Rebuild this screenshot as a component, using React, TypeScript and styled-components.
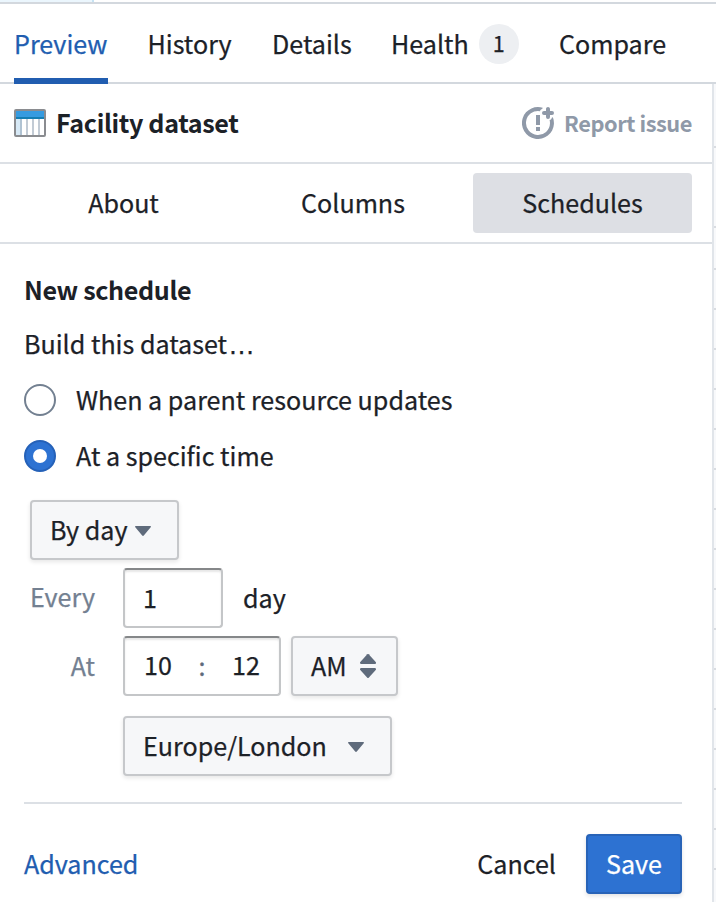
import React from "react";
import styled, { createGlobalStyle } from "styled-components";

const Global = createGlobalStyle`
  * { box-sizing: border-box; }
  body {
    margin: 0;
    background: #fff;
    color: #1c2127;
    font-family: "Noto Sans CJK SC", "Open Sans", sans-serif;
    font-size: 25.1px;
    line-height: 40px;
    overflow: hidden;
    -webkit-text-stroke: 0.25px;
  }
  button, input { font: inherit; color: inherit; }
`;

const Page = styled.div`
  display: flex;
  flex-direction: column;
  width: 716px;
  height: 902px;
  overflow: hidden;
  background: #fff;
  white-space: nowrap;
`;

const TopEdge = styled.div`
  height: 4px;
  flex: none;
  border-bottom: 2px solid #d3d8de;
`;

const TopEdgeTab = styled.div`
  width: 94px;
  height: 2px;
  background: #ebf6fd;
  border-right: 2px solid #c5e2f3;
`;

const TabBar = styled.nav`
  display: flex;
  flex: none;
  height: 80px;
  padding-left: 14px;
  border-bottom: 2px solid #d3d8de;
`;

const Tab = styled.div<{ $width: number; $active?: boolean }>`
  display: flex;
  align-items: center;
  width: ${(p) => p.$width}px;
  height: 80px;
  margin-right: 40px;
  padding-top: 4px;
  color: ${(p) => (p.$active ? "#215db0" : "#1c2127")};
  border-bottom: 6px solid ${(p) => (p.$active ? "#215db0" : "transparent")};
`;

const Badge = styled.span`
  width: 40px;
  height: 40px;
  margin: 2px 0 0 10px;
  border-radius: 50%;
  background: #edeff2;
  font-size: 21.6px;
  line-height: 38px;
  text-align: center;
`;

const Body = styled.div`
  display: flex;
  height: 818px;
`;

const Panel = styled.main`
  width: 712px;
  flex: none;
`;

const Gutter = styled.aside`
  width: 4px;
  padding-top: 62px;
  border-left: 2px solid #e1e5ea;
  background: #f8f9fb;
`;

const GutterTick = styled.div<{ $gap: number }>`
  height: 2px;
  margin-bottom: ${(p) => p.$gap}px;
  background: #d9dce1;
`;

const Header = styled.header`
  display: flex;
  align-items: center;
  height: 80px;
  padding: 0 20px 0 14px;
  border-bottom: 2px solid #dce0e5;
`;

const Title = styled.h1`
  margin: -2px auto 0 10px;
  font-size: 25.1px;
  font-weight: 700;
  letter-spacing: -0.35px;
  -webkit-text-stroke: 0;
`;

const ReportButton = styled.button`
  display: flex;
  align-items: center;
  gap: 10px;
  padding: 0;
  border: 0;
  background: none;
  color: #8f99a8;
  font-size: 21.8px;
  font-weight: 700;
  letter-spacing: -0.45px;
  -webkit-text-stroke: 0;
`;

const ReportLabel = styled.span`
  margin-top: -1px;
`;

const SubTabs = styled.div`
  display: flex;
  height: 80px;
  padding: 9px 20px 0 14px;
  border-bottom: 2px solid #dce0e5;
`;

const SubTab = styled.div<{ $active?: boolean }>`
  width: 219px;
  height: 60px;
  margin-right: 10.5px;
  border-radius: 4px;
  background: ${(p) => (p.$active ? "#dddfe4" : "transparent")};
  line-height: 58px;
  text-align: center;
  &:last-child { margin-right: 0; }
`;

const Form = styled.section`
  padding: 25px 30px 0 24px;
`;

const FormTitle = styled.h2`
  margin: 0;
  font-size: 25.1px;
  font-weight: 700;
  line-height: 40px;
  letter-spacing: -0.36px;
  -webkit-text-stroke: 0;
`;

const Lead = styled.p`
  margin: 14px 0 0;
  line-height: 40px;
`;

const Ellipsis = styled.span`
  margin-left: 1px;
  font-family: "Liberation Sans", sans-serif;
  font-size: 27px;
  line-height: 1;
`;

const Option = styled.label<{ $top: number }>`
  display: flex;
  align-items: center;
  gap: 20px;
  height: 40px;
  margin-top: ${(p) => p.$top}px;
`;

const OptionText = styled.span`
  margin-top: -2px;
`;

const Radio = styled.span<{ $checked?: boolean }>`
  display: flex;
  align-items: center;
  justify-content: center;
  width: 32px;
  height: 32px;
  border: 2px solid ${(p) => (p.$checked ? "#2561b8" : "#738091")};
  border-radius: 50%;
  background: ${(p) => (p.$checked ? "#2d72d2" : "#fff")};
`;

const RadioDot = styled.span`
  width: 14px;
  height: 14px;
  border-radius: 50%;
  background: #fff;
`;

const Fields = styled.div`
  padding: 24px 0 0 6px;
`;

const FieldRow = styled.div<{ $top: number }>`
  display: flex;
  height: 60px;
  margin-top: ${(p) => p.$top}px;
`;

const FieldLabel = styled.span<{ $lineHeight: number }>`
  width: 65px;
  margin-right: 28px;
  color: #738091;
  line-height: ${(p) => p.$lineHeight}px;
  text-align: right;
`;

const MenuButton = styled.button<{ $width: number; $gap: number; $left?: number }>`
  display: flex;
  align-items: center;
  gap: ${(p) => p.$gap}px;
  width: ${(p) => p.$width}px;
  height: 60px;
  margin-left: ${(p) => p.$left ?? 0}px;
  padding: 0 0 2px 18px;
  border: 2px solid #c6c8cb;
  border-radius: 4px;
  background: #f6f7f9;
  box-shadow: 0 2px 4px rgba(17, 20, 24, 0.1);
  text-align: left;
`;

const FieldBox = styled.div<{ $width: number }>`
  display: flex;
  align-items: center;
  width: ${(p) => p.$width}px;
  height: 60px;
  padding: 0 0 2px 18px;
  border: 2px solid #c4c6c8;
  border-top-color: #858789;
  border-radius: 4px;
  background: #fff;
  box-shadow: inset 0 2px 2px rgba(17, 20, 24, 0.1);
`;

const Digits = styled.span`
  width: 30px;
  margin: -2px -1px 0 1px;
`;

const Colon = styled.span`
  width: 58px;
  color: #5f6b7c;
  text-align: center;
`;

const Unit = styled.span`
  margin-left: 20px;
  line-height: 58px;
`;

const Footer = styled.footer`
  display: flex;
  align-items: center;
  height: 92px;
  margin-top: 26px;
  padding-top: 30px;
  border-top: 2px solid #dce0e5;
`;

const AdvancedLink = styled.a`
  margin: -2px auto 0 0;
  color: #215db0;
`;

const Cancel = styled.button`
  margin: -2px 30px 0 0;
  padding: 0;
  border: 0;
  background: none;
`;

const Save = styled.button`
  width: 96px;
  height: 60px;
  padding: 0 0 2px;
  border: 2px solid #2863b7;
  border-radius: 4px;
  background: #2d72d2;
  box-shadow: 0 2px 4px rgba(17, 20, 24, 0.12);
  color: #fff;
`;

const CaretIcon = styled.svg`
  flex: none;
  margin-top: 4px;
`;

const DoubleCaretIcon = styled.svg`
  flex: none;
  margin-top: 2px;
`;

const TableIcon = () => (
  <svg width="32" height="28" viewBox="0 0 32 28">
    <rect x="1" y="1" width="30" height="26" rx="1" fill="#fff" stroke="#8a8c90" strokeWidth="2" />
    <path d="M2 10h4v16H2z" fill="#d7e9f6" />
    <path d="M7 10v16" stroke="#b0c3d3" strokeWidth="2" />
    <path d="M13 10v16M19 10v16M25 10v16" stroke="#c2cbd5" strokeWidth="2" />
    <path d="M2 2h28v6H2z" fill="#369be0" />
    <path d="M2 8h28v2H2z" fill="#147eb3" />
  </svg>
);

const IssueIcon = () => (
  <svg width="32" height="32" viewBox="0 0 16 16" fill="#8f99a8">
    <path d="M8 0c.8 0 1.6.12 2.35.35L10.1 1c-.55.1-.95.5-1.08 1.08A6 6 0 1 0 14 8.15c0-.55-.08-1.08-.2-1.6.62-.13 1.02-.6 1.12-1.12l.52-.3A8 8 0 1 1 8 0z" />
    <path d="M7 4h2v5H7zM7 10h2v2H7z" />
    <path d="M13 0c.55 0 1 .45 1 1v1h1a1 1 0 1 1 0 2h-1v1a1 1 0 1 1-2 0V4h-1a1 1 0 1 1 0-2h1V1c0-.55.45-1 1-1z" />
  </svg>
);

const Caret = () => (
  <CaretIcon width="16" height="10" viewBox="0 0 16 10">
    <path d="M.7 0h14.6c.7 0 .9.7.4 1.2L8.8 9.5c-.4.5-1.2.5-1.6 0L.3 1.2C-.2.7 0 0 .7 0z" fill="#5f6b7c" />
  </CaretIcon>
);

const DoubleCaret = () => (
  <DoubleCaretIcon width="16" height="24" viewBox="0 0 16 24" fill="#5f6b7c">
    <path d="M7.3.3a1 1 0 0 1 1.4 0l7 7.6c.7.9.2 2.1-.9 2.1H1.2C.1 10-.4 8.8.3 7.9z" />
    <path d="M7.3 23.7a1 1 0 0 0 1.4 0l7-7.6c.7-.9.2-2.1-.9-2.1H1.2c-1.1 0-1.6 1.2-.9 2.1z" />
  </DoubleCaretIcon>
);

const tickGaps = [78, 40, ...Array(16).fill(38)];

export default function App() {
  return (
    <>
      <Global />
      <Page>
        <TopEdge>
          <TopEdgeTab />
        </TopEdge>
        <TabBar>
          <Tab $width={93.5} $active>Preview</Tab>
          <Tab $width={84.5}>History</Tab>
          <Tab $width={79}>Details</Tab>
          <Tab $width={128}>
            Health<Badge>1</Badge>
          </Tab>
          <Tab $width={108}>Compare</Tab>
        </TabBar>
        <Body>
          <Panel>
            <Header>
              <TableIcon />
              <Title>Facility dataset</Title>
              <ReportButton>
                <IssueIcon />
                <ReportLabel>Report issue</ReportLabel>
              </ReportButton>
            </Header>
            <SubTabs>
              <SubTab>About</SubTab>
              <SubTab>Columns</SubTab>
              <SubTab $active>Schedules</SubTab>
            </SubTabs>
            <Form>
              <FormTitle>New schedule</FormTitle>
              <Lead>
                Build this dataset<Ellipsis>…</Ellipsis>
              </Lead>
              <Option $top={17}>
                <Radio />
                <OptionText>When a parent resource updates</OptionText>
              </Option>
              <Option $top={16}>
                <Radio $checked>
                  <RadioDot />
                </Radio>
                <OptionText>At a specific time</OptionText>
              </Option>
              <Fields>
                <FieldRow $top={0}>
                  <MenuButton $width={149} $gap={7}>
                    By day
                    <Caret />
                  </MenuButton>
                </FieldRow>
                <FieldRow $top={8}>
                  <FieldLabel $lineHeight={56}>Every</FieldLabel>
                  <FieldBox $width={100}>1</FieldBox>
                  <Unit>day</Unit>
                </FieldRow>
                <FieldRow $top={8}>
                  <FieldLabel $lineHeight={58}>At</FieldLabel>
                  <FieldBox $width={158}>
                    <Digits>10</Digits>
                    <Colon>:</Colon>
                    <Digits>12</Digits>
                  </FieldBox>
                  <MenuButton $width={107} $gap={13} $left={10}>
                    AM
                    <DoubleCaret />
                  </MenuButton>
                </FieldRow>
                <FieldRow $top={20}>
                  <MenuButton $width={269} $gap={21} $left={93}>
                    Europe/London
                    <Caret />
                  </MenuButton>
                </FieldRow>
              </Fields>
              <Footer>
                <AdvancedLink>Advanced</AdvancedLink>
                <Cancel>Cancel</Cancel>
                <Save>Save</Save>
              </Footer>
            </Form>
          </Panel>
          <Gutter>
            {tickGaps.map((gap, i) => (
              <GutterTick key={i} $gap={gap} />
            ))}
          </Gutter>
        </Body>
      </Page>
    </>
  );
}
